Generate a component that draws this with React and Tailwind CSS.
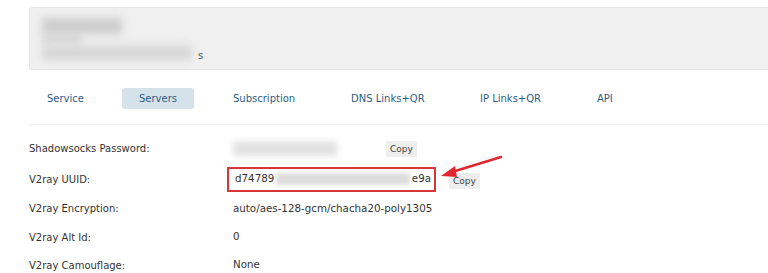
import React from "react";

const font = { fontFamily: "Verdana, 'DejaVu Sans', sans-serif" };

function Row({ label, children, h = "h-[30px]" }) {
  return (
    <div className={`flex items-center ${h}`}>
      <div className="w-[204px] shrink-0 text-[#333] text-[10px]">{label}</div>
      <div className="flex items-center">{children}</div>
    </div>
  );
}

export default function App() {
  const tabs = [
    { t: "Service", w: "w-[92px]" },
    { t: "Servers", w: "w-[94px]", active: true },
    { t: "Subscription", w: "w-[118px]" },
    { t: "DNS Links+QR", w: "w-[129px]" },
    { t: "IP Links+QR", w: "w-[117px]" },
    { t: "API", w: "w-[40px]" },
  ];
  return (
    <div className="relative w-[768px] h-[273px] overflow-hidden bg-white text-[10px]" style={font}>
      <div className="pl-[29px] pt-[7px]">
        <div className="h-[63px] bg-[#f0f0f0] border border-[#e6e6e6] rounded-l-[3px] border-r-0 relative overflow-hidden">
          <div className="absolute left-[12px] top-[10px] w-[80px] h-[16px] bg-[#c4c4c4] blur-[4px] opacity-80" />
          <div className="absolute left-[12px] top-[26px] w-[40px] h-[10px] bg-[#cccccc] blur-[4px] opacity-70" />
          <div className="absolute left-[12px] top-[38px] w-[150px] h-[14px] bg-[#cfcfcf] blur-[4px] opacity-80" />
          <div className="absolute left-[168px] top-[40px] text-[#555] text-[10px]">s</div>
        </div>
        <div className="flex items-start h-[55px] pt-[18px] border-b border-[#eeeeee]">
          <div className="flex items-center pl-[18px]">
            {tabs.map((x) => (
              <div key={x.t} className={`${x.w} shrink-0 flex`}>
                <div
                  className={`h-[21px] flex items-center rounded-[3px] text-[#2d5d86] text-[10px] ${
                    x.active ? "bg-[#d6e2ea] px-[17px] -ml-[17px]" : ""
                  }`}
                >
                  {x.t}
                </div>
              </div>
            ))}
          </div>
        </div>
        <div className="pt-[8px]">
          <Row label="Shadowsocks Password:" h="h-[31px]">
            <div className="w-[104px] h-[15px] bg-[#e2e2e2] blur-[3px]" />
            <div className="ml-[49px] px-[4px] h-[16px] leading-[16px] bg-[#eeeeee] text-[9px] text-[#444]">Copy</div>
          </Row>
          <Row label="V2ray UUID:" h="h-[30px]">
            <div className="-ml-[6px] w-[209px] h-[25px] border-2 border-[#d9343a] flex items-center pl-[6px] pr-[3px] text-[#333] text-[10.3px]">
              <span>d74789</span>
              <div className="w-[150px] h-[12px] bg-[#dcdcdc] blur-[2px] ml-[2px]" />
              <span className="ml-[2px]">e9a</span>
            </div>
            <div className="ml-[13px] mt-[4px] px-[4px] h-[16px] leading-[16px] bg-[#eeeeee] text-[9px] text-[#444]">Copy</div>
          </Row>
          <Row label="V2ray Encryption:" h="h-[29px]">
            <span className="text-[#333] text-[10.3px]">auto/aes-128-gcm/chacha20-poly1305</span>
          </Row>
          <Row label="V2ray Alt Id:" h="h-[28px]">
            <span className="text-[#333] text-[10.3px]">0</span>
          </Row>
          <Row label="V2ray Camouflage:" h="h-[28px]">
            <span className="text-[#333] text-[10.3px]">None</span>
          </Row>
        </div>
      </div>
      <svg className="absolute left-0 top-0" width="768" height="273" viewBox="0 0 768 273">
        <line x1="501" y1="157" x2="452" y2="172" stroke="#e0282e" strokeWidth="2.5" strokeLinecap="round" />
        <polygon points="441,176 455,166 457,177" fill="#e0282e" />
      </svg>
    </div>
  );
}
